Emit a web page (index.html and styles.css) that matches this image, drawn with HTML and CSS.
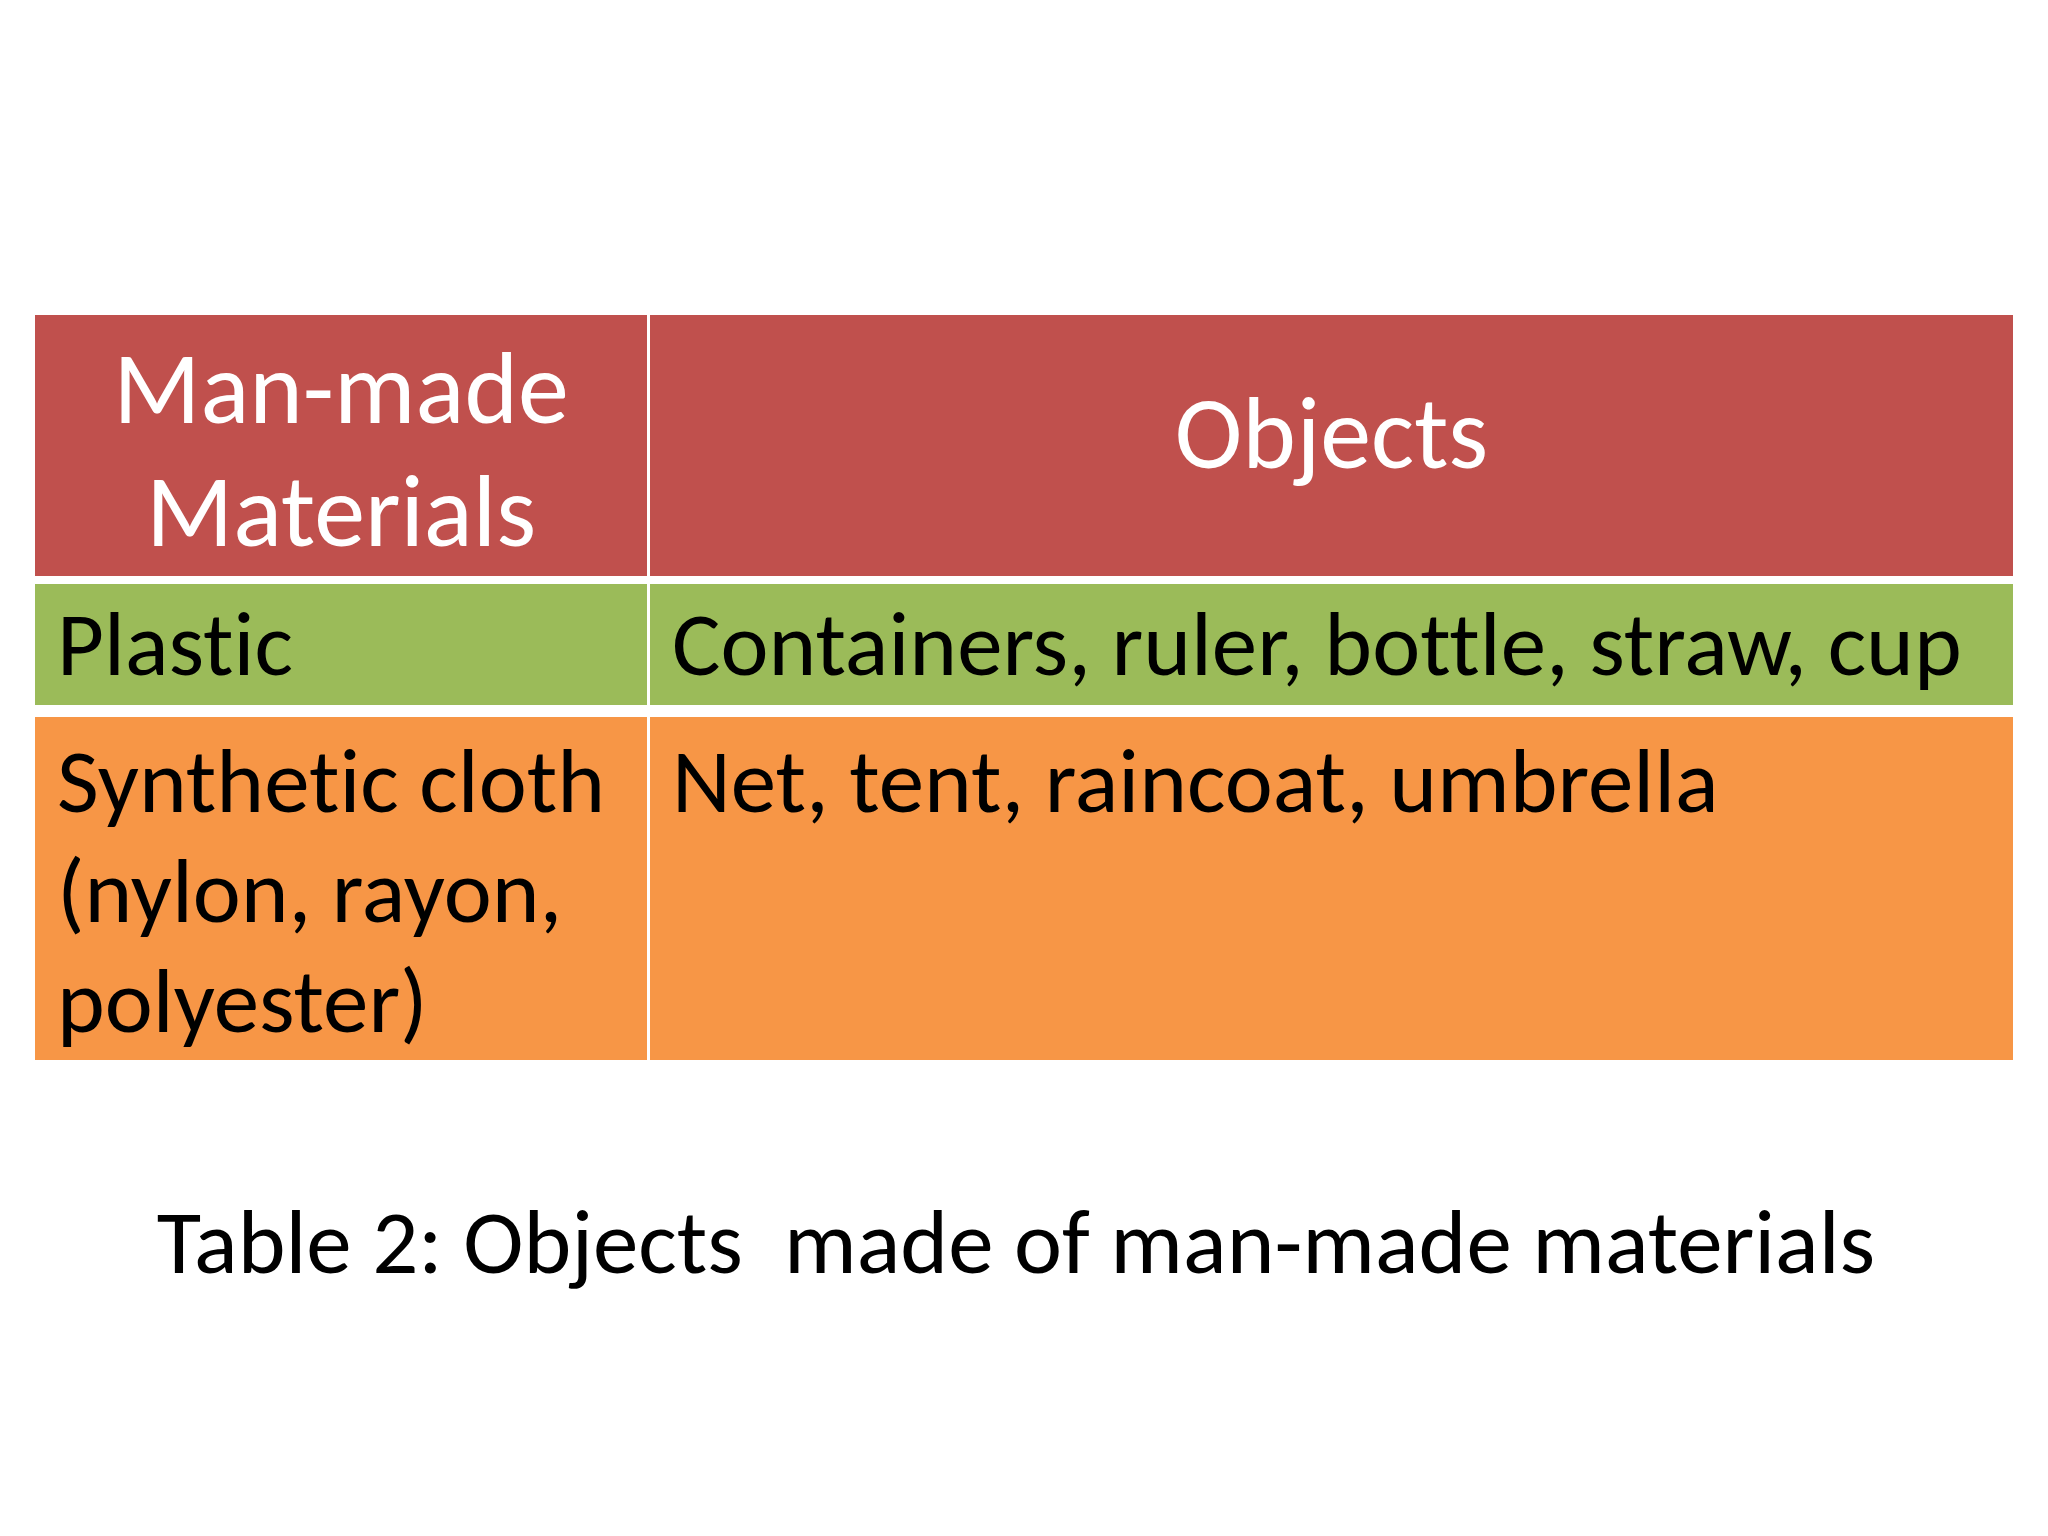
FILE: index.html
```html
<!DOCTYPE html>
<html lang="en">
<head>
<meta charset="utf-8">
<title>Table 2: Objects made of man-made materials</title>
<link rel="stylesheet" href="styles.css">
</head>
<body>
<main class="slide">
  <div class="table">
    <div class="row row-head">
      <div class="cell cell-first head-text head-first">Man-made<br>Materials</div>
      <div class="cell cell-second head-text head-second">Objects</div>
    </div>
    <div class="row row-green">
      <div class="cell cell-first body-text">Plastic</div>
      <div class="cell cell-second body-text">Containers, ruler, bottle, straw, cup</div>
    </div>
    <div class="row row-orange">
      <div class="cell cell-first body-text">Synthetic cloth (nylon, rayon, polyester)</div>
      <div class="cell cell-second body-text">Net, tent, raincoat, umbrella</div>
    </div>
  </div>
  <p class="caption">Table 2: Objects&nbsp; made of man-made materials</p>
</main>
</body>
</html>
```

FILE: styles.css
```css
html, body {
  margin: 0;
  padding: 0;
  background: #ffffff;
}

.slide {
  width: 2048px;
  height: 1536px;
  box-sizing: border-box;
  padding: 315px 35px 0 35px;
  font-family: Carlito, Calibri, "Open Sans", sans-serif;
  font-variant-ligatures: none;
  font-feature-settings: "liga" 0, "clig" 0;
  display: flex;
  flex-direction: column;
}

.table {
  display: flex;
  flex-direction: column;
  width: 1978px;
}

.row {
  display: grid;
  grid-template-columns: 612px 1363px;
  column-gap: 3px;
}

.row-head {
  height: 261px;
}

.row-green {
  margin-top: 8px;
  height: 121px;
}

.row-orange {
  margin-top: 12px;
  height: 343px;
}

.row-head .cell { background: #c0504d; }
.row-green .cell { background: #9bbb59; }
.row-orange .cell { background: #f79646; }

.cell {
  box-sizing: border-box;
}

.head-text {
  color: #ffffff;
  font-size: 102px;
  line-height: 123px;
  text-align: center;
  display: flex;
  align-items: center;
  justify-content: center;
}

.head-first {
  padding-top: 8px;
}

.head-second {
  padding-bottom: 24px;
}

.body-text {
  color: #000000;
  font-size: 91px;
  line-height: 110px;
  padding: 0 20px 0 22px;
}

.row-green .body-text {
  padding-top: 5px;
}

.row-orange .body-text {
  padding-top: 9px;
}

.caption {
  margin: 127px 0 0 0;
  padding-right: 16px;
  text-align: center;
  font-size: 91px;
  line-height: 110px;
  color: #000000;
}
```
